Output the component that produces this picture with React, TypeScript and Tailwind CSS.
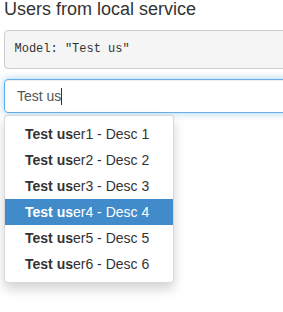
const users = [1, 2, 3, 4, 5, 6];

export default function App() {
  const active = 4;

  return (
    <div className="w-full min-h-screen overflow-hidden bg-white text-[#333] font-['Liberation_Sans',Arial,sans-serif]">
      <div className="w-[320px] pl-[4px]">
        {/* Heading */}
        <h4 className="text-[18px] leading-[1.1] font-medium mb-[10px]">Users from local service</h4>

        {/* Model */}
        <pre className="mb-[10px] px-[9.5px] py-[9.5px] bg-[#f5f5f5] border border-[#ccc] rounded-[4px] text-[12px] leading-[18.6px] text-[#333] font-['Liberation_Mono',Consolas,monospace]">
          Model: "Test us"
        </pre>

        {/* Typeahead */}
        <div className="relative">
          <div className="h-[34px] px-[12px] py-[6px] flex items-center border border-[#66afe9] rounded-[4px] bg-white text-[14px] text-[#555] shadow-[inset_0_1px_1px_rgba(0,0,0,.075),0_0_8px_rgba(102,175,233,.6)]">
            <span>Test us</span>
            <span className="inline-block w-px h-[17px] bg-[#333]" />
          </div>

          <ul className="absolute left-0 top-full mt-[2px] w-[170px] py-[5px] bg-white border border-[rgba(0,0,0,.15)] rounded-[4px] shadow-[0_6px_12px_rgba(0,0,0,.175)] text-[14px]">
            {users.map((n) => (
              <li
                key={n}
                className={
                  n === active
                    ? 'px-[20px] py-[3px] leading-[20px] bg-[#428bca] text-white whitespace-nowrap'
                    : 'px-[20px] py-[3px] leading-[20px] text-[#333] whitespace-nowrap'
                }
              >
                <strong className="font-bold">Test us</strong>er{n} - Desc {n}
              </li>
            ))}
          </ul>
        </div>
      </div>
    </div>
  );
}
